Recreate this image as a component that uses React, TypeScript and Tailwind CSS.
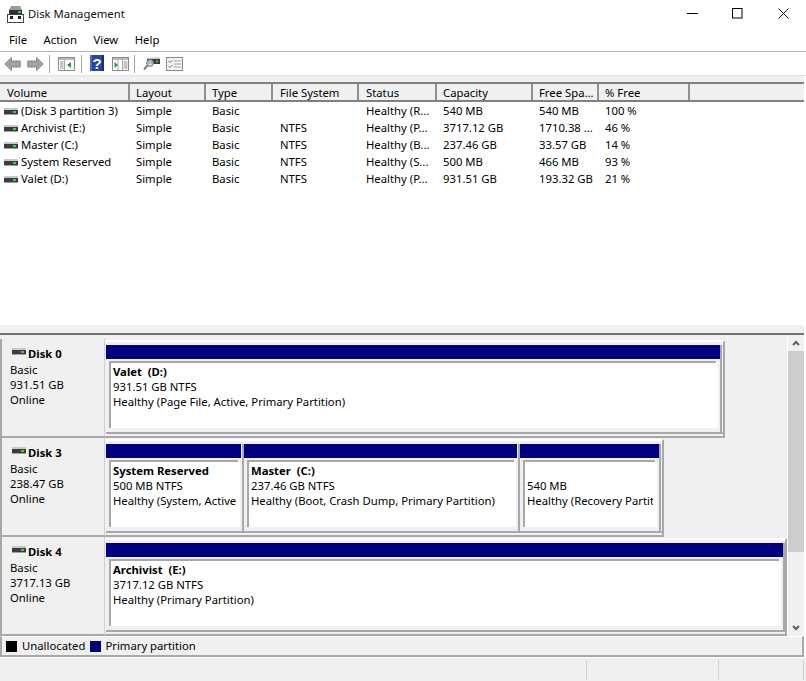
import React from 'react';

const font = { fontFamily: '"Noto Sans", sans-serif' };

const columns = [
  { label: 'Volume', w: 'w-[130px] pl-[7px]' },
  { label: 'Layout', w: 'w-[76px] pl-[6px]' },
  { label: 'Type', w: 'w-[67px] pl-[6px]' },
  { label: 'File System', w: 'w-[86px] pl-[7px]' },
  { label: 'Status', w: 'w-[78px] pl-[7px]' },
  { label: 'Capacity', w: 'w-[96px] pl-[6px]' },
  { label: 'Free Spa...', w: 'w-[66px] pl-[6px]' },
  { label: '% Free', w: 'w-[91px] pl-[6px]' },
];

const cellWidths = ['w-[130px]', 'w-[76px]', 'w-[68px]', 'w-[86px]', 'w-[77px]', 'w-[96px]', 'w-[66px]', 'w-[91px]'];

const volumes = [
  ['(Disk 3 partition 3)', 'Simple', 'Basic', '', 'Healthy (R...', '540 MB', '540 MB', '100 %'],
  ['Archivist (E:)', 'Simple', 'Basic', 'NTFS', 'Healthy (P...', '3717.12 GB', '1710.38 ...', '46 %'],
  ['Master (C:)', 'Simple', 'Basic', 'NTFS', 'Healthy (B...', '237.46 GB', '33.57 GB', '14 %'],
  ['System Reserved', 'Simple', 'Basic', 'NTFS', 'Healthy (S...', '500 MB', '466 MB', '93 %'],
  ['Valet (D:)', 'Simple', 'Basic', 'NTFS', 'Healthy (P...', '931.51 GB', '193.32 GB', '21 %'],
];

function DriveIcon() {
  return (
    <svg width="14" height="8" viewBox="0 0 14 8" className="shrink-0">
      <rect x="0" y="0" width="14" height="2" fill="#c8c8c8" />
      <rect x="0" y="2" width="14" height="4" fill="#3c3c3c" />
      <rect x="9" y="3" width="3" height="2" fill="#3ecf4a" />
      <rect x="0" y="6" width="14" height="1" fill="#a0a0a0" />
    </svg>
  );
}

function AppIcon() {
  return (
    <svg width="17" height="17" viewBox="0 0 17 17" className="shrink-0">
      <path d="M4 0h9l2 4H2z" fill="#9a9a9a" />
      <rect x="2" y="4" width="13" height="4" fill="#2e2e2e" />
      <rect x="11" y="5" width="3" height="2" fill="#35d04a" />
      <rect x="0.5" y="8.5" width="16" height="8" fill="#fff" stroke="#444" />
      <rect x="3" y="10" width="3" height="3" fill="#222" />
      <rect x="11" y="10" width="3" height="3" fill="#222" />
    </svg>
  );
}

function ArrowIcon({ flip }: { flip?: boolean }) {
  return (
    <svg width="17" height="14" viewBox="0 0 17 14" style={flip ? { transform: 'scaleX(-1)' } : undefined}>
      <path d="M7.5 0.5 L0.8 7 L7.5 13.5 V10 H16.2 V4 H7.5 Z" fill="#a3a3a3" stroke="#848484" />
    </svg>
  );
}

function PaneIcon({ right }: { right?: boolean }) {
  return (
    <svg width="17" height="14" viewBox="0 0 17 14">
      <rect x="0.5" y="0.5" width="16" height="13" fill="#fff" stroke="#8a8a8a" />
      <rect x="1" y="1" width="15" height="2" fill="#b9b9b9" />
      <path d={right ? 'M6 3v10M10.5 3v10' : 'M6.5 3v10'} stroke="#a8a8a8" />
      <path d={right ? 'M11.5 5h4M11.5 7h4M11.5 9h4M11.5 11h4' : 'M2 5h3.5M2 7h3.5M2 9h3.5M2 11h3.5'} stroke="#8a8a8a" />
      <path d={right ? 'M2.5 5v6l3.5-3z' : 'M13 5v6l-4-3z'} fill="#18a33a" />
    </svg>
  );
}

function HelpIcon() {
  return (
    <svg width="14" height="16" viewBox="0 0 14 16">
      <rect width="14" height="16" fill="#2a45a8" />
      <rect x="0" y="0" width="2" height="16" fill="#4d67c8" />
      <rect x="12" y="0" width="2" height="16" fill="#1b2f7e" />
      <text x="7" y="13.5" textAnchor="middle" fontSize="15" fontWeight="700" fill="#fff" fontFamily="Liberation Sans">?</text>
    </svg>
  );
}

function FinderIcon() {
  return (
    <svg width="17" height="16" viewBox="0 0 17 16">
      <rect x="4" y="3" width="13" height="5" fill="#3a3a3a" />
      <rect x="4" y="1.5" width="13" height="1.5" fill="#c9c9c9" />
      <rect x="13" y="4.5" width="2" height="2" fill="#3ecf4a" />
      <circle cx="7" cy="7" r="3.4" fill="#b5dbe9" fillOpacity="0.85" stroke="#777" />
      <path d="M4.6 9.4L1 13.5" stroke="#8a7a60" strokeWidth="2" />
    </svg>
  );
}

function ChecklistIcon() {
  return (
    <svg width="17" height="14" viewBox="0 0 17 14">
      <rect x="0.5" y="0.5" width="16" height="13" fill="#f4f4f4" stroke="#8a8a8a" />
      <path d="M2.5 4l1.5 1.5L6.5 3M2.5 9l1.5 1.5L6.5 8" fill="none" stroke="#2a7fd0" />
      <path d="M8 4h7M8 7h7M8 10h7" stroke="#a0a0a0" />
    </svg>
  );
}

function Sep({ ml }: { ml: string }) {
  return <div className={`w-px h-[18px] bg-[#a0a0a0] shrink-0 ${ml}`} />;
}

type Part = { w: string; last?: boolean; name?: string; line1: string; line2: string };

function Partition({ w, last, name, line1, line2 }: Part) {
  return (
    <div className={`${w} h-[87px] shrink-0 border-r-2 border-[#a8a8a8] flex flex-col`}>
      <div className={`h-[14px] bg-[#000080] shrink-0 ${last ? '' : 'mr-[1px]'}`} />
      <div className="h-[67px] mt-[2px] ml-[3px] mr-[2px] bg-white flex flex-col border-l-2 border-[#a8a8a8]">
        <div className="h-[2px] bg-[#a8a8a8] mr-[2px] shrink-0" />
        <div className="pl-[2px] mr-[4px] pt-[1px] overflow-hidden whitespace-pre leading-[15px]">
          <div className="font-bold h-[15px]">{name}</div>
          <div>{line1}</div>
          <div>{line2}</div>
        </div>
      </div>
    </div>
  );
}

function DiskRow({ name, size, frame, parts }: { name: string; size: string; frame: string; parts: Part[] }) {
  return (
    <div className="flex h-[99px]">
      <div className="w-[105px] shrink-0 border-l-2 border-b-2 border-[#a8a8a8] border-r border-r-[#d0d0d0] pl-[8px] pt-[6px] leading-[15px]">
        <div className="flex items-center gap-[3px] font-bold h-[17px] ml-[2px]">
          <div className="mb-[4px]"><DriveIcon /></div>
          <span className="-ml-px">{name}</span>
        </div>
        <div>Basic</div>
        <div>{size}</div>
        <div>Online</div>
      </div>
      <div className={`${frame} h-[98px] mt-[1px] border-r-2 border-b-2 border-[#a8a8a8] border-t-2 border-t-white pt-[3px] pl-[1px]`}>
        <div className="flex h-[89px] border-b-2 border-[#a8a8a8]">
          {parts.map((p, i) => (
            <Partition key={i} {...p} />
          ))}
        </div>
      </div>
    </div>
  );
}

export default function App() {
  return (
    <div className="w-[806px] h-[681px] bg-white text-[11.3px] text-black overflow-hidden flex flex-col" style={font}>
      {/* title bar */}
      <div className="h-[29px] flex items-center shrink-0">
        <div className="ml-[7px] mr-[4px] mb-[1px]"><AppIcon /></div>
        <span className="text-[#111]">Disk Management</span>
        <div className="ml-auto flex items-center mb-[2px]">
          <svg width="11" height="2" viewBox="0 0 11 2" className="mr-[34px]"><rect width="11" height="1" fill="#000" /></svg>
          <svg width="11" height="11" viewBox="0 0 11 11" className="mr-[35px]"><rect x="0.5" y="0.5" width="9.5" height="9.5" fill="none" stroke="#000" /></svg>
          <svg width="11" height="11" viewBox="0 0 11 11" className="mr-[17px]"><path d="M0.5 0.5L10.5 10.5M10.5 0.5L0.5 10.5" stroke="#000" strokeWidth="0.9" /></svg>
        </div>
      </div>
      {/* menu */}
      <div className="h-[22px] flex items-center pl-[9px] gap-[16.5px] shrink-0">
        {['File', 'Action', 'View', 'Help'].map(m => (
          <span key={m}>{m}</span>
        ))}
      </div>
      <div className="h-px bg-[#b0b3b8] shrink-0" />
      {/* toolbar */}
      <div className="h-[23px] flex items-center pl-[4px] shrink-0">
        <ArrowIcon />
        <div className="ml-[6px]"><ArrowIcon flip /></div>
        <Sep ml="ml-[5px]" />
        <div className="ml-[8px]"><PaneIcon /></div>
        <Sep ml="ml-[6px]" />
        <div className="ml-[8px] mb-[2px]"><HelpIcon /></div>
        <div className="ml-[8px]"><PaneIcon right /></div>
        <Sep ml="ml-[5px]" />
        <div className="ml-[8px]"><FinderIcon /></div>
        <div className="ml-[6px]"><ChecklistIcon /></div>
      </div>
      <div className="h-px bg-[#e0e0e0] shrink-0" />
      <div className="h-[6px] bg-[#f0f0f0] shrink-0 mr-[2px]" />
      {/* volume list */}
      <div className="h-[251px] w-[804px] shrink-0 flex flex-col border-t-2 border-[#808080] border-b-8 border-b-[#f0f0f0]">
        <div className="flex h-[18px] shrink-0 border-b-2 border-[#808080] bg-[#f0f0f0]">
          {columns.map(c => (
            <div key={c.label} className={`${c.w} shrink-0 border-r-2 border-[#909090] leading-[17px] overflow-hidden whitespace-nowrap`}>
              {c.label}
            </div>
          ))}
          <div className="flex-1" />
        </div>
        <div className="pt-[1px]">
          {volumes.map(row => (
            <div key={row[0]} className="flex h-[17px] items-center whitespace-nowrap">
              {row.map((cell, i) => (
                <div key={i} className={`${cellWidths[i]} shrink-0 ${i === 0 ? 'pl-[4px] flex items-center gap-[3px]' : 'pl-[6px]'}`}>
                  {i === 0 && <DriveIcon />}
                  {cell}
                </div>
              ))}
            </div>
          ))}
        </div>
      </div>
      {/* graphical pane */}
      <div className="w-[804px] h-[324px] shrink-0 bg-[#f0f0f0] flex flex-col border-t-2 border-[#707070]">
        <div className="flex flex-1 min-h-0">
          <div className="flex-1 min-w-0 pt-[4px]">
            <DiskRow
              name="Disk 0"
              size="931.51 GB"
              frame="w-[620px]"
              parts={[{ w: 'w-[616px]', last: true, name: 'Valet  (D:)', line1: '931.51 GB NTFS', line2: 'Healthy (Page File, Active, Primary Partition)' }]}
            />
            <DiskRow
              name="Disk 3"
              size="238.47 GB"
              frame="w-[559px]"
              parts={[
                { w: 'w-[138px]', name: 'System Reserved', line1: '500 MB NTFS', line2: 'Healthy (System, Active, Primary Partition)' },
                { w: 'w-[276px]', name: 'Master  (C:)', line1: '237.46 GB NTFS', line2: 'Healthy (Boot, Crash Dump, Primary Partition)' },
                { w: 'w-[141px]', last: true, line1: '540 MB', line2: 'Healthy (Recovery Partition)' },
              ]}
            />
            <DiskRow
              name="Disk 4"
              size="3717.13 GB"
              frame="w-[683px]"
              parts={[{ w: 'w-[679px]', last: true, name: 'Archivist  (E:)', line1: '3717.12 GB NTFS', line2: 'Healthy (Primary Partition)' }]}
            />
          </div>
          <div className="w-[17px] shrink-0 bg-[#f0f0f0] flex flex-col border-l border-white">
            <div className="h-[16px] flex items-center justify-center">
              <svg width="8" height="6" viewBox="0 0 8 6"><path d="M1 5l3-3 3 3" fill="none" stroke="#606060" strokeWidth="2" /></svg>
            </div>
            <div className="h-[201px] bg-[#cdcdcd]" />
            <div className="flex-1" />
            <div className="h-[17px] flex items-center justify-center">
              <svg width="8" height="6" viewBox="0 0 8 6"><path d="M1 1l3 3 3-3" fill="none" stroke="#606060" strokeWidth="2" /></svg>
            </div>
          </div>
        </div>
        {/* legend */}
        <div className="h-[21px] shrink-0 flex items-center pl-[4px] border-t border-white border-b-2 border-b-[#a8a8a8] border-l-2 border-l-[#a8a8a8] border-r-2 border-r-[#a8a8a8]">
          <div className="w-[11px] h-[11px] bg-black" />
          <span className="ml-[5px]">Unallocated</span>
          <div className="w-[11px] h-[11px] bg-[#000080] ml-[5px]" />
          <span className="ml-[4px]">Primary partition</span>
        </div>
      </div>
      {/* status bar */}
      <div className="flex-1 bg-[#f0f0f0] border-t border-white flex pt-[2px] pb-[1px] pl-[586px]">
        <div className="w-[132px] border-l border-[#d0d0d0]" />
        <div className="w-[86px] border-l border-r border-[#d0d0d0]" />
      </div>
    </div>
  );
}
